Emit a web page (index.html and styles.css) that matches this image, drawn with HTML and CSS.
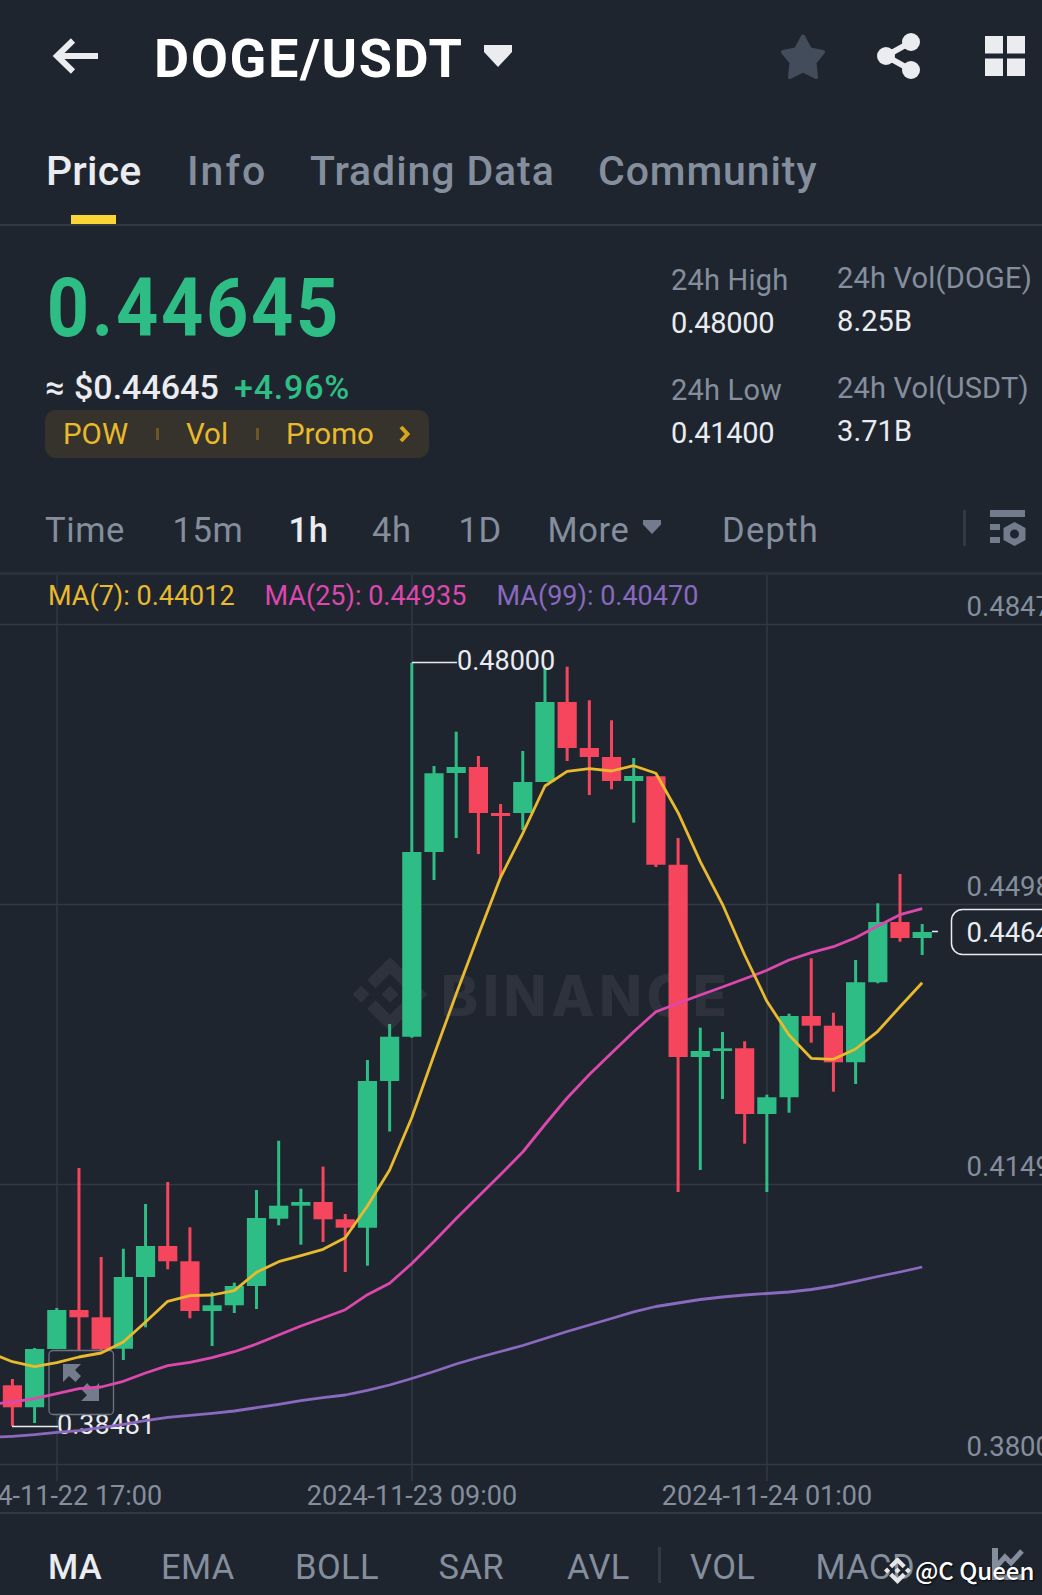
FILE: index.html
```html
<!DOCTYPE html>
<html lang="en">
  <head>
    <meta charset="UTF-8" />
    <meta name="viewport" content="width=device-width, initial-scale=1.0" />
    <title>DOGE/USDT</title>
    <link rel="stylesheet" href="styles.css">
  </head>
  <body>
    <header class="header">
      <svg class="back" viewBox="0 0 46 36">
        <path d="M21 2.5 L5 18 L21 33.5 M4 18 H46"></path>
      </svg>
      <h1>DOGE/USDT</h1>
      <svg class="caret" viewBox="0 0 28 22">
        <path d="M0 0H28V7L14 22L0 7Z"></path>
      </svg>
      <div class="header-actions">
        <svg class="star" viewBox="0 0 46 46">
          <path d="M23 2.5 L30 15.5 L43 18 L34.5 28.500 L36 43 L23 36.5 L10 43 L11.500 28.500 L3 18 L16 15.500Z"></path>
        </svg>
        <svg class="share" viewBox="0 0 43 46">
          <path d="M34 9 L9 23 L34 37"></path>
          <circle cx="34" cy="9" r="9"></circle>
          <circle cx="9" cy="23" r="9"></circle>
          <circle cx="34" cy="37" r="9"></circle>
        </svg>
        <svg class="apps" viewBox="0 0 40 40">
          <path d="M0 0H18V17.500H0ZM22 0H40V17.500H22ZM0 22.500H18V40H0ZM22 22.500H40V40H22Z"></path>
        </svg>
      </div>
    </header>

    <nav class="tabs">
      <a class="tab active">Price</a>
      <a class="tab">Info</a>
      <a class="tab">Trading Data</a>
      <a class="tab">Community</a>
    </nav>

    <section class="summary">
      <div class="price">
        <div class="last-price">0.44645</div>
        <div class="fiat"><span class="approx">≈</span><span class="usd">$0.44645</span><span class="change">+4.96%</span></div>
        <div class="tags">
          <span class="tag-pow">POW</span>
          <i></i>
          <span class="tag-vol">Vol</span>
          <i></i>
          <span class="tag-promo">Promo</span>
          <svg viewBox="0 0 11 18"><path d="M2 2L8.500 9L2 16"></path></svg>
        </div>
      </div>
      <dl class="stats">
        <dt>24h High</dt>
        <dd>0.48000</dd>
        <dt>24h Low</dt>
        <dd>0.41400</dd>
      </dl>
      <dl class="stats volume">
        <dt>24h Vol(DOGE)</dt>
        <dd>8.25B</dd>
        <dt>24h Vol(USDT)</dt>
        <dd>3.71B</dd>
      </dl>
    </section>

    <nav class="intervals">
      <a>Time</a>
      <a>15m</a>
      <a class="active">1h</a>
      <a>4h</a>
      <a>1D</a>
      <a>More<svg class="more-caret" viewBox="0 0 18 14"><path d="M0 0H18V4.500L9 14L0 4.500Z"></path></svg></a>
      <a>Depth</a>
      <span class="divider"></span>
      <svg class="settings" viewBox="0 0 36 36">
        <path fill-rule="evenodd" d="M0 0H35V7H0ZM0 14H10V20H0ZM0 27H10V33H0ZM24.500 12L35.500 18V30L24.500 36L13.500 30V18ZM24.500 19.500A4.500 4.500 0 1 0 24.500 28.500A4.500 4.500 0 1 0 24.500 19.500Z"></path>
      </svg>
    </nav>

    <svg class="chart" viewBox="0 575 1042 937">
      <g class="grid">
        <path d="M0 624.500H1042M0 904.500H1042M0 1184.500H1042M0 1464.500H1042"></path>
        <path d="M57 575V1481M412 575V1481M767 575V1481"></path>
      </g>
      <g class="brand">
        <path transform="translate(352.700 957) scale(3.110)" d="M16.624 13.920l2.718 2.715-7.353 7.353-7.353-7.352 2.718-2.716 4.635 4.659 4.636-4.659zm4.637-4.637L24 12l-2.715 2.716L18.568 12l2.692-2.716zm-9.272.001l2.716 2.691-2.716 2.717L9.272 12l2.716-2.715zm-9.272-.001L5.409 12l-2.691 2.692L0 12l2.716-2.716zM11.989.012l7.353 7.329-2.717 2.715-4.636-4.636-4.635 4.660-2.717-2.715 7.353-7.353z"></path>
        <text x="441" y="1015.500" textLength="286">BINANCE</text>
      </g>
      <g id="candles"></g>
      <g class="marks">
        <path d="M412 662.500H457M12 1426.500H58M932 931.500H938"></path>
        <text x="457" y="670">0.48000</text>
        <text x="57" y="1434">0.38481</text>
      </g>
      <g class="expand">
        <rect x="49" y="1350.500" width="64.500" height="64" rx="4"></rect>
        <path d="M63 1364H81L75 1370L81 1376L75.500 1382L69 1376L63 1382ZM99 1401H81L87 1395L81.500 1389.500L87 1383L93 1389.500L99 1383Z"></path>
      </g>
      <g id="averages"></g>
      <g class="legend">
        <text class="ma7" x="48" y="605">MA(7): 0.44012</text>
        <text class="ma25" x="264.500" y="605">MA(25): 0.44935</text>
        <text class="ma99" x="496.500" y="605">MA(99): 0.40470</text>
      </g>
      <g class="axis">
        <text x="966.500" y="616">0.4847</text>
        <text x="966.500" y="896">0.4498</text>
        <text x="966.500" y="1176">0.4149</text>
        <text x="966.500" y="1456">0.3800</text>
        <text class="date" x="57" y="1505">2024-11-22 17:00</text>
        <text class="date" x="412" y="1505">2024-11-23 09:00</text>
        <text class="date" x="767" y="1505">2024-11-24 01:00</text>
      </g>
      <g class="current">
        <rect x="951.500" y="909.500" width="120" height="45" rx="11"></rect>
        <text x="966.500" y="942">0.4464</text>
      </g>
    </svg>

    <nav class="indicators">
      <a class="active">MA</a>
      <a>EMA</a>
      <a>BOLL</a>
      <a>SAR</a>
      <a>AVL</a>
      <span class="divider"></span>
      <a>VOL</a>
      <a>MACD</a>
      <svg class="chart-icon" viewBox="0 0 32 32">
        <path class="axes" d="M0 0H6V26H30V32H0Z"></path>
        <path class="trend" d="M4 19L13 9L19 15L30 3"></path>
      </svg>
      <div class="author">
        <svg viewBox="0 0 24 24">
          <path d="M16.624 13.920l2.718 2.715-7.353 7.353-7.353-7.352 2.718-2.716 4.635 4.659 4.636-4.659zm4.637-4.637L24 12l-2.715 2.716L18.568 12l2.692-2.716zm-9.272.001l2.716 2.691-2.716 2.717L9.272 12l2.716-2.715zm-9.272-.001L5.409 12l-2.691 2.692L0 12l2.716-2.716zM11.989.012l7.353 7.329-2.717 2.715-4.636-4.636-4.635 4.660-2.717-2.715 7.353-7.353z"></path>
        </svg>
        <span>@C Queen</span>
      </div>
    </nav>

    <script src="chart.js"></script>
  </body>
</html>
```
FILE: styles.css
```css
* {
  margin: 0;
  padding: 0;
  box-sizing: border-box;
}

body {
  width: 1042px;
  height: 1595px;
  overflow: hidden;
  background-color: #1f252f;
  color: #eaecef;
  font-family: Roboto, "Liberation Sans", sans-serif;
}

svg {
  display: block;
  flex-shrink: 0;
}

/* Header */
.header {
  display: flex;
  align-items: center;
  height: 117px;
  padding: 0 17px 0 52px;
}

.header svg {
  fill: #eaecef;
  margin-bottom: 5px;
}

.header .back {
  width: 46px;
  height: 36px;
  fill: none;
  stroke: #eaecef;
  stroke-width: 6;
}

h1 {
  flex: 0 0 386px;
  padding-left: 56px;
  font-size: 54px;
  font-weight: 700;
  letter-spacing: 1.6px;
  line-height: 117px;
  color: #ffffff;
  white-space: nowrap;
}

.header .caret {
  width: 28px;
  height: 22px;
}

.header-actions {
  display: flex;
  align-items: center;
  margin-left: auto;
}

.header .star {
  width: 46px;
  height: 46px;
  margin-right: 51px;
  margin-bottom: 3px;
  fill: #434c5a;
  stroke: #434c5a;
  stroke-width: 4;
  stroke-linejoin: round;
}

.header .share {
  width: 43px;
  height: 46px;
  margin-right: 65px;
}

.share path {
  fill: none;
  stroke: #eaecef;
  stroke-width: 6;
}

.header .apps {
  width: 40px;
  height: 40px;
}

/* Tabs */
.tabs {
  display: grid;
  grid-template-columns: 141px 123px 288px 240px;
  height: 109px;
  padding: 24px 0 0 46px;
  border-bottom: 2px solid #323945;
}

.tab {
  justify-self: start;
  display: flex;
  flex-direction: column;
  align-items: center;
  font-size: 41px;
  font-weight: 500;
  line-height: 60px;
  letter-spacing: 0.9px;
  color: #848e9c;
  white-space: nowrap;
}

.tab:nth-child(2) {
  letter-spacing: 2px;
}

.tab.active {
  color: #eaecef;
  letter-spacing: 0.2px;
}

.tab.active::after {
  content: "";
  width: 45px;
  height: 9px;
  margin-top: 14px;
  background: #fcd535;
}

/* Price summary */
.summary {
  display: flex;
  height: 261px;
  padding: 34px 0 0 45px;
}

.price {
  width: 626px;
}

.last-price {
  padding-left: 2px;
  font-size: 82px;
  font-weight: 700;
  line-height: 96px;
  letter-spacing: 3px;
  color: #2ebd85;
  transform: scaleX(0.9);
  transform-origin: left;
}

.fiat {
  display: flex;
  margin-top: 9px;
  font-size: 34px;
  font-weight: 500;
  line-height: 45px;
}

.approx {
  width: 29px;
}

.usd {
  width: 160px;
}

.change {
  color: #2ebd85;
  letter-spacing: 0.8px;
}

.tags {
  display: flex;
  align-items: center;
  width: 384px;
  height: 48px;
  padding-left: 18px;
  border-radius: 11px;
  background: #35332b;
  color: #e9b92e;
  font-size: 29.500px;
  line-height: 50px;
}

.tag-pow {
  width: 93px;
}

.tag-vol {
  width: 70px;
}

.tag-promo {
  width: 113px;
}

.tags i {
  width: 3px;
  height: 12px;
  margin-right: 27px;
  background: #6b5725;
}

.tags svg {
  width: 11px;
  height: 18px;
  fill: none;
  stroke: #d9a51f;
  stroke-width: 4;
}

.stats {
  width: 166px;
  margin-top: -1px;
  font-size: 29px;
  line-height: 43px;
  white-space: nowrap;
}

.stats dt {
  color: #848e9c;
  letter-spacing: 0.2px;
}

.stats dd {
  margin: 0 0 24px;
  letter-spacing: -0.3px;
}

.volume {
  margin-top: -3px;
}

.volume dd {
  letter-spacing: 0.1px;
}

/* Chart intervals */
.intervals {
  display: grid;
  grid-template-columns: 127.500px 116px 83.500px 86.500px 89px 174.500px 241px 26.500px 36px;
  align-items: center;
  height: 88px;
  padding-left: 45px;
  border-bottom: 3px solid #2a303c;
  color: #848e9c;
  font-size: 34.500px;
}

.intervals a {
  display: flex;
  align-items: center;
  letter-spacing: 0.6px;
}

.intervals a:nth-child(7) {
  letter-spacing: 1.3px;
}

.active {
  color: #eaecef;
  font-weight: 500;
}

.more-caret {
  width: 18px;
  height: 14px;
  margin: 0 0 5px 14px;
  fill: #737c8c;
}

.divider {
  width: 3px;
  height: 36px;
  margin-bottom: 4px;
  background: #323945;
}

.settings {
  width: 36px;
  height: 36px;
  margin-bottom: 3px;
  fill: #737c8c;
}

/* Chart */
.chart {
  width: 1042px;
  height: 937px;
  font-size: 27px;
}

.grid {
  stroke: #323945;
  stroke-width: 1.500;
}

.brand {
  fill: #2e323d;
  font-family: Inter, sans-serif;
  font-size: 56px;
  font-weight: 800;
}

.wick {
  stroke-width: 3;
}

.body {
  stroke-width: 19.200;
}

.up {
  stroke: #2ebd85;
}

.down {
  stroke: #f6465d;
}

.average {
  fill: none;
  stroke-width: 2.800;
  stroke-linejoin: round;
}

.average.ma7 {
  stroke: #e9b92e;
}

.average.ma25 {
  stroke: #dc48ae;
}

.average.ma99 {
  stroke: #8a69bf;
}

.legend .ma7 {
  fill: #e9b92e;
}

.legend .ma25 {
  fill: #dc48ae;
}

.legend .ma99 {
  fill: #8a69bf;
}

.marks path {
  stroke: #eaecef;
  stroke-width: 1.500;
}

.marks text,
.current text {
  fill: #eaecef;
}

.expand rect {
  fill: #1f252f;
  stroke: #6b7482;
  stroke-width: 1.300;
}

.expand path {
  fill: #737c8c;
}

.axis {
  fill: #848e9c;
}

.axis text,
.current text {
  font-size: 27.500px;
}

.axis .date {
  font-size: 27px;
  text-anchor: middle;
}

.current rect {
  fill: #1f252f;
  stroke: #eaecef;
  stroke-width: 1.500;
}

/* Indicators */
.indicators {
  position: relative;
  display: grid;
  grid-template-columns: 113px 134px 143.500px 128.500px 91px 32px 125.500px 176.500px 32px;
  align-items: center;
  height: 83px;
  padding: 24px 0 0 48px;
  border-top: 2px solid #323945;
  color: #848e9c;
  font-size: 34.500px;
}

.indicators a {
  letter-spacing: 0.4px;
}

.chart-icon {
  width: 32px;
  height: 32px;
  margin-bottom: 6px;
}

.axes {
  fill: #848e9c;
}

.trend {
  fill: none;
  stroke: #848e9c;
  stroke-width: 5;
}

.author {
  position: absolute;
  left: 884px;
  top: 38px;
  display: flex;
  align-items: center;
  gap: 4px;
  color: #ffffff;
  font-family: "Noto Sans CJK SC", sans-serif;
  font-size: 24px;
  font-weight: 500;
  line-height: 36px;
  white-space: nowrap;
  text-shadow: 1px 1px 2px #000000;
}

.author svg {
  width: 27px;
  height: 27px;
  fill: #e6e6e6;
}
```
FILE: chart.js
```javascript
// x of the first candle and distance between candles
const START = 12.4;
const STEP = 22.19;

// [direction, high, body top, body bottom, low]
const candles = [
  ['down', 1379, 1385.3, 1407.3, 1426],
  ['up', 1348, 1349, 1407.3, 1423],
  ['up', 1308, 1310, 1349, 1349],
  ['down', 1168, 1310, 1317.3, 1350],
  ['down', 1257, 1317.3, 1349.3, 1350],
  ['up', 1248.7, 1277, 1348.7, 1360],
  ['up', 1204, 1246, 1277, 1327.3],
  ['down', 1182, 1246, 1261.3, 1269.3],
  ['down', 1227.3, 1261.3, 1311, 1318.3],
  ['up', 1292, 1305.3, 1311, 1346],
  ['up', 1282.7, 1286, 1305.3, 1313],
  ['up', 1190, 1218, 1286, 1309],
  ['up', 1140.7, 1205.7, 1218.7, 1225.3],
  ['up', 1188.7, 1202, 1205.7, 1244.7],
  ['down', 1166.7, 1202, 1219.3, 1242],
  ['down', 1214, 1219.3, 1227.7, 1272],
  ['up', 1060, 1081, 1227.7, 1265.7],
  ['up', 1024, 1036.7, 1081, 1131.5],
  ['up', 662.7, 852, 1036.7, 1037.7],
  ['up', 766, 773.3, 852, 880],
  ['up', 731.7, 767, 773, 838],
  ['down', 756, 767, 813, 854],
  ['down', 804, 813, 816, 877],
  ['up', 751, 782, 813, 830],
  ['up', 669, 702, 782, 782],
  ['down', 666.7, 702, 748, 761],
  ['down', 700.3, 748, 757, 795],
  ['down', 720.3, 757, 781, 789.3],
  ['up', 758, 776, 781, 822.7],
  ['down', 776, 776.3, 864.7, 867],
  ['down', 838, 864.7, 1057, 1192],
  ['up', 1027.7, 1051, 1057, 1170],
  ['up', 1032, 1048.3, 1051, 1099],
  ['down', 1041.3, 1048.3, 1114, 1143.7],
  ['up', 1094.7, 1097.3, 1114, 1192],
  ['up', 1013.7, 1016, 1097.3, 1112.7],
  ['down', 958.3, 1016, 1025.7, 1042.7],
  ['down', 1012.7, 1025.7, 1062.3, 1091.7],
  ['up', 960, 982.3, 1062.3, 1084],
  ['up', 903.3, 922, 982.3, 983.3],
  ['down', 874, 922, 938, 941.7],
  ['up', 924, 932, 938, 955],
];

// each series starts one candle before the left edge
const averages = {
  ma99: [1437.5, 1436.3, 1434.7, 1432.3, 1430.7, 1427.7, 1424.3, 1420.7, 1417.3, 1415.3, 1413.3, 1411, 1407.7, 1404.3,
    1400.7, 1397.7, 1395, 1390.3, 1385, 1378.5, 1371.5, 1364, 1357.5, 1351.5, 1345.5, 1338.5, 1331.5, 1325, 1318.5,
    1311.8, 1306.5, 1303, 1299.5, 1297, 1295, 1293.5, 1292, 1289.5, 1286, 1281.3, 1276.5, 1272, 1267],
  ma25: [1404.5, 1402, 1398.7, 1393.7, 1388.7, 1387, 1381.3, 1373, 1365.7, 1362.3, 1357.7, 1351.7, 1344, 1335, 1326,
    1318, 1309.7, 1294.7, 1283.3, 1263.5, 1241.5, 1218.5, 1196.5, 1174.5, 1152, 1124.5, 1098, 1074.5, 1053, 1031.7,
    1011.7, 1003.3, 995, 987, 978.7, 970.3, 960, 952.7, 946.7, 937.7, 926, 914.7, 908.7],
  ma7: [1353, 1361.7, 1366.7, 1362.7, 1357, 1353, 1342, 1322, 1301.3, 1295.7, 1295, 1290.7, 1272.3, 1261.7, 1255.7,
    1249.3, 1237.7, 1206, 1170, 1117.5, 1055, 994, 935, 877.3, 833.3, 786, 771.3, 768.7, 771, 765.7, 773.3, 812.7,
    861.7, 904.3, 955, 1001.3, 1035, 1058.3, 1059.3, 1049, 1031.3, 1006.7, 982.7],
};

function addPath(parent, className, d) {
  const path = document.createElementNS('http://www.w3.org/2000/svg', 'path');
  path.setAttribute('class', className);
  path.setAttribute('d', d);
  parent.appendChild(path);
}

const candleGroup = document.getElementById('candles');
candles.forEach(([direction, high, top, bottom, low], i) => {
  const x = START + i * STEP;
  addPath(candleGroup, `wick ${direction}`, `M${x} ${high}V${low}`);
  addPath(candleGroup, `body ${direction}`, `M${x} ${top}V${bottom}`);
});

const averageGroup = document.getElementById('averages');
Object.entries(averages).forEach(([name, values]) => {
  const points = values.map((y, i) => `${START + (i - 1) * STEP} ${y}`);
  addPath(averageGroup, `average ${name}`, 'M' + points.join('L'));
});
```
